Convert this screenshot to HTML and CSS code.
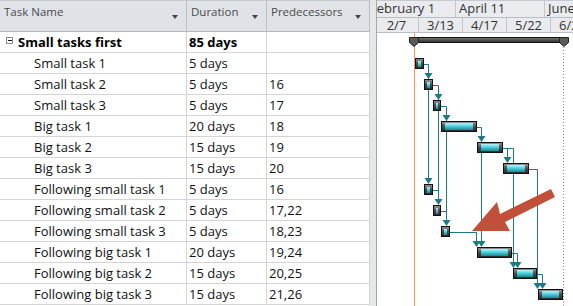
FILE: index.html
```html
<!DOCTYPE html>
<html lang="en">
<head>
    <meta charset="UTF-8">
    <title>Gantt Chart</title>
    <link rel="stylesheet" href="styles.css">
</head>
<body>
    <div class="app">
        <div class="sheet">
            <div class="hcell"><span>Task Name</span><i class="drop"></i></div>
            <div class="hcell"><span>Duration</span><i class="drop"></i></div>
            <div class="hcell"><span>Predecessors</span><i class="drop"></i></div>

            <div class="cell summary name"><span class="toggle"><i></i></span>Small tasks first</div>
            <div class="cell summary">85 days</div>
            <div class="cell"></div>

            <div class="cell name sub">Small task 1</div><div class="cell">5 days</div><div class="cell"></div>
            <div class="cell name sub">Small task 2</div><div class="cell">5 days</div><div class="cell">16</div>
            <div class="cell name sub">Small task 3</div><div class="cell">5 days</div><div class="cell">17</div>
            <div class="cell name sub">Big task 1</div><div class="cell">20 days</div><div class="cell">18</div>
            <div class="cell name sub">Big task 2</div><div class="cell">15 days</div><div class="cell">19</div>
            <div class="cell name sub">Big task 3</div><div class="cell">15 days</div><div class="cell">20</div>
            <div class="cell name sub">Following small task 1</div><div class="cell">5 days</div><div class="cell">16</div>
            <div class="cell name sub">Following small task 2</div><div class="cell">5 days</div><div class="cell">17,22</div>
            <div class="cell name sub">Following small task 3</div><div class="cell">5 days</div><div class="cell">18,23</div>
            <div class="cell name sub">Following big task 1</div><div class="cell">20 days</div><div class="cell">19,24</div>
            <div class="cell name sub">Following big task 2</div><div class="cell">15 days</div><div class="cell">20,25</div>
            <div class="cell name sub">Following big task 3</div><div class="cell">15 days</div><div class="cell">21,26</div>
        </div>

        <div class="splitter"></div>

        <div class="gantt">
            <div class="timescale">
                <div class="tier tier-top">
                    <div class="tcell">February 1</div>
                    <div class="tcell">April 11</div>
                    <div class="tcell">June 20</div>
                </div>
                <div class="tier tier-bottom">
                    <div class="tcell">2/7</div>
                    <div class="tcell">3/13</div>
                    <div class="tcell">4/17</div>
                    <div class="tcell">5/22</div>
                    <div class="tcell">6/26</div>
                </div>
            </div>

            <svg class="chart" width="196" height="274" viewBox="377 32 196 274">
                <defs>
                    <linearGradient id="cyan" x1="0" y1="0" x2="0" y2="1">
                        <stop offset="0" stop-color="#b4f6fa"/>
                        <stop offset="0.4" stop-color="#55d8e2"/>
                        <stop offset="1" stop-color="#168893"/>
                    </linearGradient>
                    <linearGradient id="cap" x1="0" y1="0" x2="0" y2="1">
                        <stop offset="0" stop-color="#9a9a9a"/>
                        <stop offset="0.5" stop-color="#4c4c4c"/>
                        <stop offset="1" stop-color="#262626"/>
                    </linearGradient>
                    <linearGradient id="sum" x1="0" y1="0" x2="0" y2="1">
                        <stop offset="0" stop-color="#7a7a7a"/>
                        <stop offset="1" stop-color="#2c2c2c"/>
                    </linearGradient>
                </defs>

                <!-- project start and finish -->
                <line x1="414.5" y1="32" x2="414.5" y2="306" stroke="#f59a48"/>
                <line x1="563.5" y1="46" x2="563.5" y2="306" stroke="#8a8a8a" stroke-dasharray="1 2"/>

                <!-- summary bar -->
                <rect x="410.5" y="36.5" width="157" height="5" fill="url(#sum)" stroke="#111"/>
                <polygon points="409.5,36.5 418.5,36.5 418.5,41.5 414,45.5 409.5,41.5" fill="#5a5a5a" stroke="#222"/>
                <polygon points="559.5,36.5 568.5,36.5 568.5,41.5 564,45.5 559.5,41.5" fill="#5a5a5a" stroke="#222"/>

                <!-- links -->
                <g class="links" fill="none" stroke="#1d7a80">
                    <path d="M424 63.5 H428.5 V73"/>
                    <path d="M428.5 73 V178"/>
                    <path d="M433 84.5 H438.5 V94"/>
                    <path d="M438.5 94 V199"/>
                    <path d="M433 189.5 H438.5"/>
                    <path d="M441 105.5 H446.5 V115"/>
                    <path d="M446.5 115 V220"/>
                    <path d="M441 210.5 H446.5"/>
                    <path d="M477 126.5 H481.5 V136"/>
                    <path d="M481.5 136 V241"/>
                    <path d="M450 231.5 H476.5 V241"/>
                    <path d="M503 147.5 H507.5 V157"/>
                    <path d="M503 147.5 H513.5 V262"/>
                    <path d="M512 252.5 H517.5 V262"/>
                    <path d="M529 168.5 H537.5 V283"/>
                    <path d="M537 273.5 H542.5 V283"/>
                </g>
                <g class="arrows" fill="#1d7a80">
                    <polygon points="424.5,72 432.5,72 428.5,78"/>
                    <polygon points="434.5,93 442.5,93 438.5,99"/>
                    <polygon points="442.5,114 450.5,114 446.5,120"/>
                    <polygon points="477.5,135 485.5,135 481.5,141"/>
                    <polygon points="503.5,156 511.5,156 507.5,162"/>
                    <polygon points="424.5,177 432.5,177 428.5,183"/>
                    <polygon points="434.5,198 442.5,198 438.5,204"/>
                    <polygon points="442.5,219 450.5,219 446.5,225"/>
                    <polygon points="472.5,240 480.5,240 476.5,246"/>
                    <polygon points="477.5,240 485.5,240 481.5,246"/>
                    <polygon points="509.5,261 517.5,261 513.5,267"/>
                    <polygon points="513.5,261 521.5,261 517.5,267"/>
                    <polygon points="533.5,282 541.5,282 537.5,288"/>
                    <polygon points="538.5,282 546.5,282 542.5,288"/>
                </g>

                <!-- task bars -->
                <g class="bars">
                    <rect x="415.5" y="57.5" width="8" height="10" fill="url(#cap)" stroke="#111"/>
                    <rect x="418" y="60" width="3" height="6" fill="url(#cyan)"/>
                    <rect x="424.5" y="78.5" width="8" height="10" fill="url(#cap)" stroke="#111"/>
                    <rect x="427" y="81" width="3" height="6" fill="url(#cyan)"/>
                    <rect x="433.5" y="99.5" width="7" height="10" fill="url(#cap)" stroke="#111"/>
                    <rect x="436" y="102" width="2" height="6" fill="url(#cyan)"/>
                    <rect x="441.5" y="120.5" width="35" height="10" fill="url(#cap)" stroke="#111"/>
                    <rect x="445" y="122" width="28" height="7" fill="url(#cyan)"/>
                    <rect x="477.5" y="141.5" width="25" height="10" fill="url(#cap)" stroke="#111"/>
                    <rect x="481" y="143" width="18" height="7" fill="url(#cyan)"/>
                    <rect x="503.5" y="162.5" width="25" height="10" fill="url(#cap)" stroke="#111"/>
                    <rect x="507" y="164" width="18" height="7" fill="url(#cyan)"/>
                    <rect x="424.5" y="183.5" width="8" height="10" fill="url(#cap)" stroke="#111"/>
                    <rect x="427" y="186" width="3" height="6" fill="url(#cyan)"/>
                    <rect x="433.5" y="204.5" width="7" height="10" fill="url(#cap)" stroke="#111"/>
                    <rect x="436" y="207" width="2" height="6" fill="url(#cyan)"/>
                    <rect x="441.5" y="225.5" width="8" height="10" fill="url(#cap)" stroke="#111"/>
                    <rect x="444" y="228" width="3" height="6" fill="url(#cyan)"/>
                    <rect x="477.5" y="246.5" width="34" height="10" fill="url(#cap)" stroke="#111"/>
                    <rect x="481" y="248" width="27" height="7" fill="url(#cyan)"/>
                    <rect x="513.5" y="267.5" width="23" height="10" fill="url(#cap)" stroke="#111"/>
                    <rect x="517" y="269" width="16" height="7" fill="url(#cyan)"/>
                    <rect x="538.5" y="288.5" width="24" height="10" fill="url(#cap)" stroke="#111"/>
                    <rect x="542" y="290" width="17" height="7" fill="url(#cyan)"/>
                </g>

                <!-- callout arrow -->
                <polygon points="472,230 497,201 500,213 551,188 555,196 505,221 510,230" fill="#c14f3a"/>
            </svg>
        </div>
    </div>
</body>
</html>
```

FILE: styles.css
```css
body {
    margin: 0;
    font-family: "Open Sans", "Noto Sans", sans-serif;
    font-size: 13px;
    color: #111;
    background: #fff;
}

.app {
    display: flex;
    width: 573px;
    height: 306px;
    overflow: hidden;
}

/* task sheet */
.sheet {
    display: grid;
    grid-template-columns: 187px 80px 103px;
    grid-template-rows: 32px;
    grid-auto-rows: 21px;
    flex: none;
}

.hcell {
    display: flex;
    justify-content: space-between;
    align-items: flex-start;
    padding: 3px 8px 0 4px;
    font-size: 11.5px;
    background: #dfe3e8;
    color: #4a4a4a;
    border-top: 1px solid #c6cad0;
    border-bottom: 1px solid #b3b8bf;
    border-right: 1px solid #b9bec5;
    box-sizing: border-box;
}

.drop {
    width: 0;
    height: 0;
    margin-top: 11px;
    border-left: 3.5px solid transparent;
    border-right: 3.5px solid transparent;
    border-top: 4px solid #444;
}

.cell {
    display: flex;
    align-items: center;
    padding-left: 2px;
    border-right: 1px solid #d4d4d4;
    border-bottom: 1px solid #d4d4d4;
    box-sizing: border-box;
    white-space: nowrap;
    overflow: hidden;
}

.name {
    padding-left: 6px;
}

.sub {
    padding-left: 34px;
}

.summary {
    font-weight: bold;
    color: #000;
}

.toggle {
    display: inline-flex;
    align-items: center;
    justify-content: center;
    width: 7px;
    height: 7px;
    border: 1px solid #8e8e8e;
    margin: -3px 5px 0 0;
    box-sizing: border-box;
}

.toggle i {
    width: 4px;
    height: 1px;
    background: #111;
}

.splitter {
    flex: none;
    width: 7px;
    background: #e5e7ea;
    border-right: 1px solid #a3a8ae;
    box-sizing: border-box;
}

/* gantt */
.gantt {
    flex: 1;
    overflow: hidden;
    display: flex;
    flex-direction: column;
}

.timescale {
    background: #e9ebee;
    color: #333;
    border-top: 1px solid #c6cad0;
    flex: none;
}

.tier {
    display: flex;
    overflow: hidden;
    border-bottom: 1px solid #b9bec5;
    white-space: nowrap;
}

.tier-top {
    height: 16px;
}

.tier-top .tcell {
    flex: none;
    width: 89px;
    padding-left: 3px;
    line-height: 15px;
    border-right: 1px solid #c2c6cc;
    box-sizing: border-box;
}

.tier-top .tcell:first-child {
    margin-left: -10px;
}

.tier-bottom {
    height: 14px;
}

.tier-bottom .tcell {
    flex: none;
    width: 44px;
    text-align: center;
    line-height: 14px;
    border-right: 1px solid #c2c6cc;
    box-sizing: border-box;
}

.tier-bottom .tcell:first-child {
    margin-left: -2px;
}

.chart {
    display: block;
    flex: none;
}
```
